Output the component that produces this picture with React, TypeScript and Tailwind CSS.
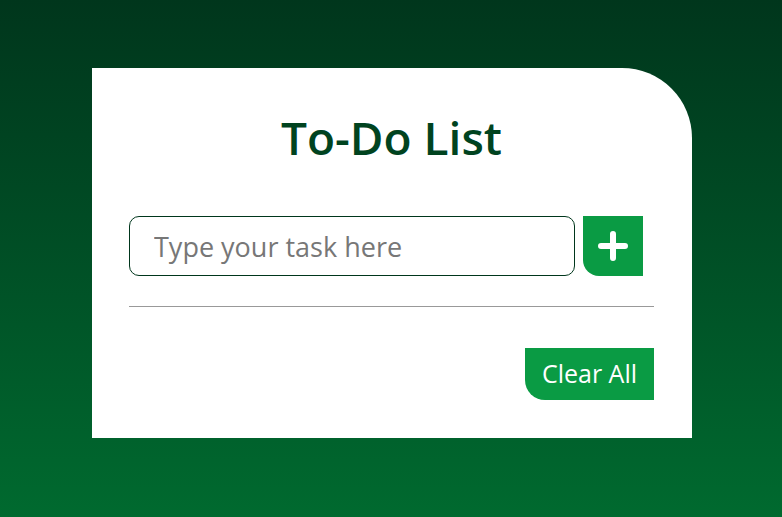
export default function App() {
  return (
    <div
      className="min-h-screen w-full bg-gradient-to-b from-[#00361c] to-[#006a2f] pt-[68px]"
      style={{ fontFamily: '"Open Sans", "Noto Sans", sans-serif' }}
    >
      <div className="ml-[92px] w-[600px] h-[370px] bg-white rounded-tr-[70px] pl-[37px] pr-[38px] pt-[34px]">
        <h1 className="h-[70px] flex items-center justify-center text-[46px] font-semibold text-[#00431f] leading-none">
          To-Do List
        </h1>
        <div className="flex gap-2 mt-[44px]">
          <input
            type="text"
            placeholder="Type your task here"
            className="w-[446px] h-[60px] border border-[#00361c] rounded-[10px] pl-6 text-[27px] text-[#333] placeholder:text-[#777] outline-none"
          />
          <button className="w-[60px] h-[60px] bg-[#0a9b44] rounded-bl-[16px] flex items-center justify-center">
            <svg width="32" height="32" viewBox="0 0 32 32">
              <path d="M16 4v24M4 16h24" stroke="white" strokeWidth="6" strokeLinecap="round" />
            </svg>
          </button>
        </div>
        <div className="mt-[30px] border-t border-[#999]" />
        <div className="flex justify-end mt-[41px]">
          <button className="w-[129px] h-[52px] bg-[#0a9b44] text-white text-[25px] rounded-bl-[20px]">
            Clear All
          </button>
        </div>
      </div>
    </div>
  );
}
